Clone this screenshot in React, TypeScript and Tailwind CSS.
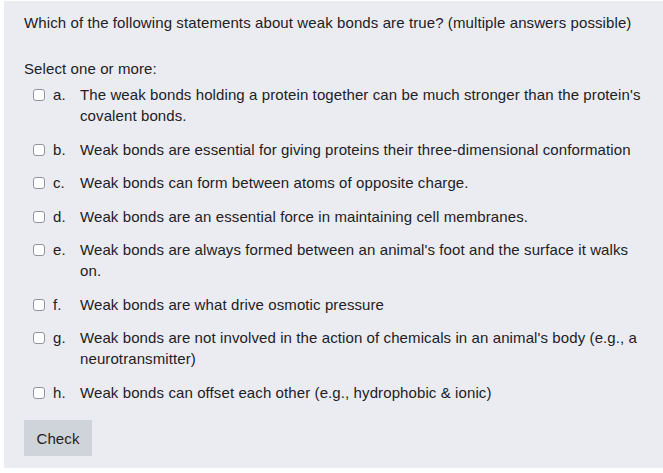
import React from "react";

const options: { key: string; text: string }[] = [
  { key: "a", text: "The weak bonds holding a protein together can be much stronger than the protein's covalent bonds." },
  { key: "b", text: "Weak bonds are essential for giving proteins their three-dimensional conformation" },
  { key: "c", text: "Weak bonds can form between atoms of opposite charge." },
  { key: "d", text: "Weak bonds are an essential force in maintaining cell membranes." },
  { key: "e", text: "Weak bonds are always formed between an animal's foot and the surface it walks on." },
  { key: "f", text: "Weak bonds are what drive osmotic pressure" },
  { key: "g", text: "Weak bonds are not involved in the action of chemicals in an animal's body (e.g., a neurotransmitter)" },
  { key: "h", text: "Weak bonds can offset each other (e.g., hydrophobic & ionic)" },
];

export default function App() {
  return (
    <div
      className="h-[473px] w-[663px] bg-white pl-[4px] pt-[1px] pb-[5px] text-[#1d2125]"
      style={{ fontFamily: '"Liberation Sans", Arial, sans-serif' }}
    >
      <div className="h-full bg-[#ebecf1] pl-[20px] pr-[20px] pt-[11px] text-[15px] leading-[21px] tracking-[0.1px]">
        <p>Which of the following statements about weak bonds are true? (multiple answers possible)</p>
        <p className="mt-[25px]">Select one or more:</p>
        <div className="mt-[5px] flex flex-col">
          {options.map((o) => (
            <label key={o.key} className="flex items-start pb-[12.5px]">
              <span className="ml-[9px] mt-[5px] h-[12px] w-[12px] shrink-0 rounded-[3px] border border-[#8f959e] bg-white" />
              <span className="ml-[8px] w-[27px] shrink-0">{o.key}.</span>
              <span>{o.text}</span>
            </label>
          ))}
        </div>
        <button className="mt-[5px] h-[36px] w-[68px] bg-[#ced4da] text-[15px] text-[#1d2125]">Check</button>
      </div>
    </div>
  );
}
